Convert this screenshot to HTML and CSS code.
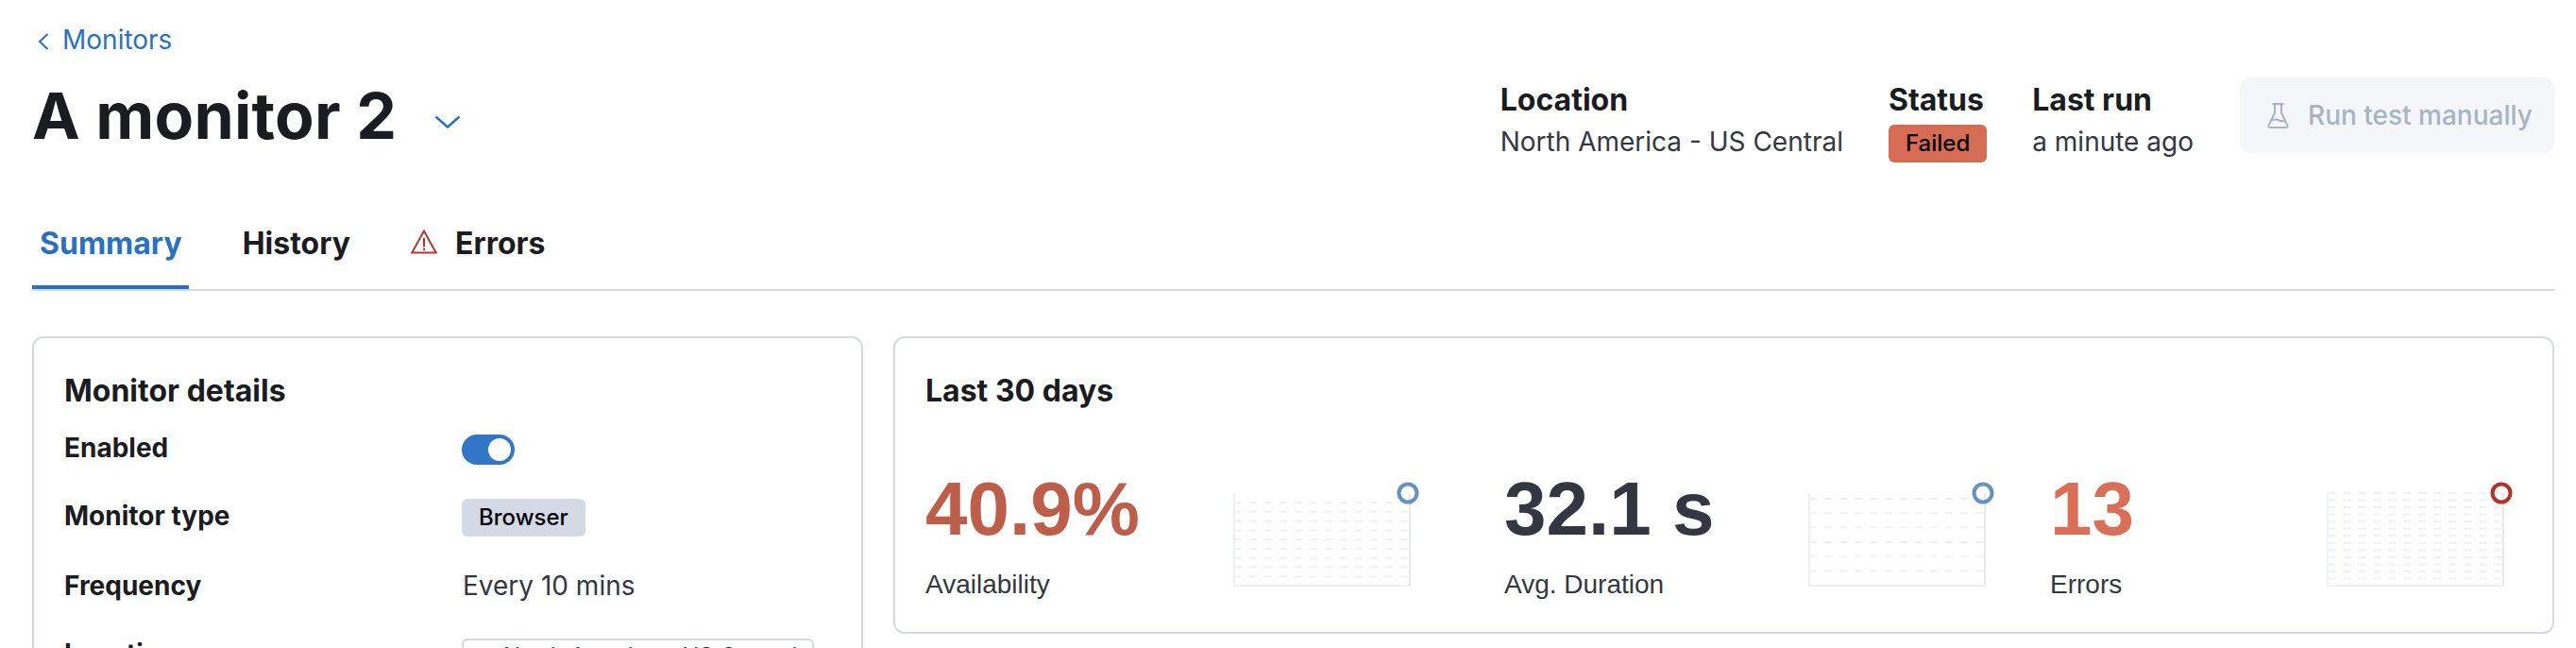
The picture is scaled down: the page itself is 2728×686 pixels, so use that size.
FILE: index.html
```html
<!DOCTYPE html>
<html lang="en">
<head>
<meta charset="utf-8">
<title>A monitor 2</title>
<link rel="stylesheet" href="styles.css">
</head>
<body>
<div class="page">
  <nav class="crumb">
    <svg class="crumb-icon" viewBox="0 0 12 18" width="12" height="18"><path d="M10.5 1 2 9l8.5 8"/></svg>
    <a class="crumb-link">Monitors</a>
  </nav>

  <header class="head">
    <h1 class="title">A monitor 2</h1>
    <svg class="title-caret" viewBox="0 0 28 14" width="28" height="14"><path d="M1.500 1.500 14 12.500 26.500 1.500"/></svg>
    <div class="meta-group">
      <div class="meta">
        <div class="meta-label">Location</div>
        <div class="meta-value">North America - US Central</div>
      </div>
      <div class="meta">
        <div class="meta-label">Status</div>
        <span class="badge badge-failed">Failed</span>
      </div>
      <div class="meta meta-last">
        <div class="meta-label">Last run</div>
        <div class="meta-value">a minute ago</div>
      </div>
      <button class="run-btn" disabled>
        <svg class="flask" viewBox="0 0 26 30" width="26" height="30"><path d="M6.500 3H18.500M9 3v9.500L2.600 25.600C1.900 27 2.600 28 4 28h17c1.400 0 2.100-1 1.400-2.400L16 12.500V3M5.500 20.500c3.500-2 6-1 8 0s4.500 1 7 0"/></svg>
        <span>Run test manually</span>
      </button>
    </div>
  </header>

  <div class="tabs">
    <a class="tab tab-active">Summary</a>
    <a class="tab">History</a>
    <a class="tab tab-icon">
      <svg class="warn" viewBox="0 0 28 26" width="28" height="26"><path class="warn-o" d="M14 1.500 1.300 24.500h25.400ZM14 9v9.500"/><circle class="warn-dot" cx="14" cy="21" r="1.200"/></svg>
      Errors
    </a>
  </div>

  <main class="cards">
    <section class="card">
      <h2 class="card-title">Monitor details</h2>
      <dl class="details">
        <dt>Enabled</dt>
        <dd><span class="toggle"><span class="toggle-thumb"></span></span></dd>
        <dt>Monitor type</dt>
        <dd><span class="badge badge-plain">Browser</span></dd>
        <dt>Frequency</dt>
        <dd>Every 10 mins</dd>
        <dt>Location</dt>
        <dd><span class="loc-box">North America - US Central</span></dd>
      </dl>
    </section>

    <section class="card card-stats">
      <h2 class="card-title">Last 30 days</h2>
      <div class="stats">
        <div class="stat">
          <div class="stat-text stat-text-a">
            <div class="stat-num num-a">40.9%</div>
            <div class="stat-label">Availability</div>
          </div>
          <svg class="spark" viewBox="0 0 200 112" width="200" height="112">
            <path class="grid" d="M2 22H188M2 31.800H188M2 41.600H188M2 51.400H188M2 61.200H188M2 71H188M2 80.800H188M2 90.600H188M2 100.400H188"/>
            <path class="axis" d="M2 12V110H188"/><path class="axis-r" d="M188 12V110"/>
            <circle class="dot-blue" cx="186" cy="12" r="9.500"/>
          </svg>
        </div>
        <div class="stat">
          <div class="stat-text stat-text-b">
            <div class="stat-num num-b">32.1 s</div>
            <div class="stat-label">Avg. Duration</div>
          </div>
          <svg class="spark" viewBox="0 0 200 112" width="200" height="112">
            <path class="grid" d="M2 18H188M2 33.300H188M2 48.600H188M2 63.900H188M2 79.200H188M2 94.500H188"/>
            <path class="axis" d="M2 12V110H188"/><path class="axis-r" d="M188 12V110"/>
            <circle class="dot-blue" cx="186" cy="12" r="9.500"/>
          </svg>
        </div>
        <div class="stat">
          <div class="stat-text stat-text-c">
            <div class="stat-num num-c">13</div>
            <div class="stat-label">Errors</div>
          </div>
          <svg class="spark" viewBox="0 0 200 112" width="200" height="112">
            <path class="grid" d="M2 12H188M2 19.500H188M2 27.100H188M2 34.600H188M2 42.200H188M2 49.700H188M2 57.300H188M2 64.800H188M2 72.400H188M2 79.900H188M2 87.500H188M2 95H188M2 102.600H188"/>
            <path class="axis" d="M2 12V110H188"/><path class="axis-r" d="M188 12V110"/>
            <circle class="dot-red" cx="186" cy="12" r="9.500"/>
          </svg>
        </div>
      </div>
    </section>
  </main>
</div>
</body>
</html>
```
FILE: styles.css
```css
* { box-sizing: border-box; }
html, body { margin: 0; padding: 0; background: #fff; }
body { font-family: Inter, "Liberation Sans", sans-serif; color: #343741; font-size: 28px; }

.page { height: 686px; overflow: hidden; padding: 0 23px 0 34px; }

.crumb { height: 82px; padding: 26px 0 0 6px; display: flex; align-items: flex-start; }
.crumb-icon { margin-top: 9px; margin-right: 14px; flex: none; }
.crumb-icon path { fill: none; stroke: #2b6fc0; stroke-width: 2; }
.crumb-link { color: #2b6fc0; line-height: 32px; }

.head { display: flex; align-items: flex-start; height: 90px; }
.title { margin: 0; font-size: 68px; line-height: 80px; font-weight: 700; color: #1a1c21; letter-spacing: 0.2px; }
.title-caret { margin: 40px 0 0 40px; flex: none; }
.title-caret path { fill: none; stroke: #2b6fc0; stroke-width: 2.500; }

.meta-group { margin-left: auto; display: flex; gap: 48px; align-items: flex-start; }
.meta { padding-top: 4px; }
.meta-last { margin-right: 1px; }
.meta-label { font-size: 32px; line-height: 40px; font-weight: 700; color: #1a1c21; }
.meta-value { margin-top: 4px; line-height: 40px; white-space: nowrap; }

.badge { display: inline-block; font-size: 24px; font-weight: 500; line-height: 40px; height: 40px; padding: 0 18px; border-radius: 6px; color: #000; }
.badge-failed { margin-top: 6px; background: #d76c54; }
.badge-plain { background: #d3dae6; }

.run-btn { display: flex; align-items: center; width: 333px; height: 80px; padding: 0 0 0 28px; gap: 18px; border: 0; border-radius: 12px; background: #f5f6fa; color: #a9b3c4; font: 500 28px/40px Inter, sans-serif; }
.flask { flex: none; }
.flask path { fill: none; stroke: #a9b3c4; stroke-width: 2; }

.tabs { margin-top: 66px; display: flex; gap: 49px; border-bottom: 2px solid #d3dae6; height: 70px; }
.tab { height: 68px; padding: 0 7px 24px 8px; font-size: 32px; line-height: 40px; font-weight: 700; color: #1a1c21; border-bottom: 4px solid transparent; display: flex; gap: 19px; }
.tab-active { color: #2b6fc0; border-bottom-color: #2b6fc0; }
.warn { margin-top: 5px; flex: none; }
.warn-o { fill: none; stroke: #b03a2e; stroke-width: 2; }
.warn-dot { fill: #b03a2e; }

.cards { margin-top: 48px; display: grid; grid-template-columns: 880px 1fr; gap: 32px; align-items: start; }
.card { border: 2px solid #d3dae6; border-radius: 12px; padding: 36px 32px 0; background: #fff; }
.card-stats { height: 315px; }
.card-title { margin: 0; font-size: 32px; line-height: 40px; font-weight: 700; color: #1a1c21; }

.details { margin: 20px 0 0; display: grid; grid-template-columns: 422px 1fr; row-gap: 32px; }
.details dt { font-weight: 700; line-height: 40px; color: #1a1c21; }
.details dd { margin: 0; line-height: 40px; }

.toggle { display: flex; justify-content: flex-end; width: 56px; height: 32px; margin: 6px 0 0 -1px; padding: 4px; border-radius: 16px; background: #3176c7; }
.toggle-thumb { width: 24px; height: 24px; border-radius: 50%; background: #fff; }
.badge-plain { margin: 2px 0 0 -1px; vertical-align: top; }

.loc-box { display: block; width: 373px; margin: 4px 0 0 -1px; padding: 1px 0 0 42px; border: 2px solid #d3dae6; border-radius: 6px; font-size: 24px; line-height: 32px; white-space: nowrap; }

.stats { margin-top: 65px; display: grid; grid-template-columns: 613px 578px 1fr; font-family: "Liberation Sans", Arial, sans-serif; }
.stat { display: flex; align-items: flex-start; }
.stat-text { flex: none; }
.stat-text-a { width: 325px; }
.stat-text-b { width: 321px; }
.stat-text-c { width: 292px; }
.stat-num { font-size: 80px; line-height: 80px; font-weight: 700; white-space: nowrap; }
.num-a { color: #bd5e4b; }
.num-b { color: #343741; }
.num-c { color: #d96f56; }
.stat-label { margin-top: 20px; line-height: 40px; color: #343741; }
.spark { margin-top: 11px; flex: none; }
.grid { fill: none; stroke: #f0f1f6; stroke-width: 2; stroke-dasharray: 8 8; }
.axis { fill: none; stroke: #eff0f5; stroke-width: 2; }
.axis-r { fill: none; stroke: #e6e8ee; stroke-width: 2; }
.dot-blue { fill: none; stroke: #6692be; stroke-width: 4; }
.dot-red { fill: none; stroke: #b0352a; stroke-width: 4; }
```
